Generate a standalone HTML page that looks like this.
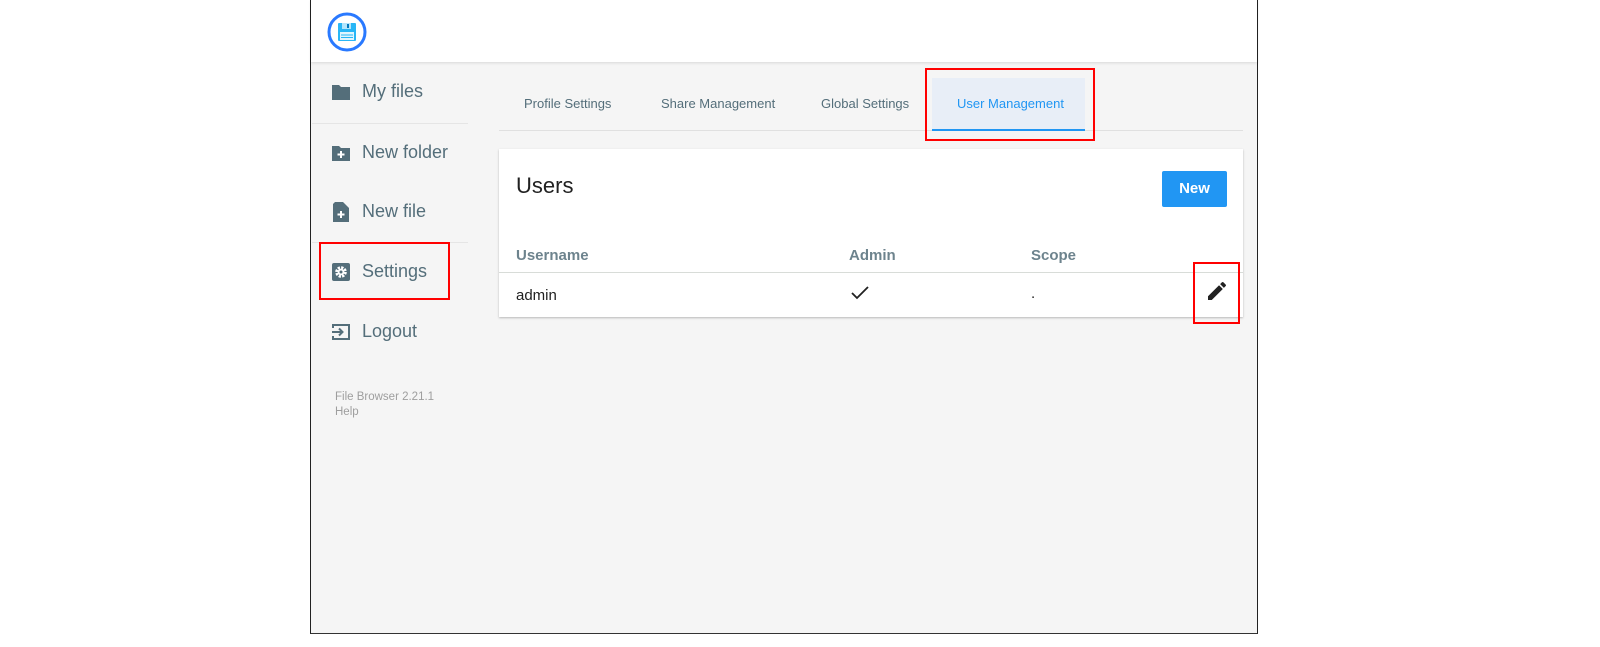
<!DOCTYPE html>
<html><head><style>
*{margin:0;padding:0;box-sizing:border-box}
body{width:1600px;height:647px;background:#fff;font-family:"Liberation Sans",sans-serif;position:relative;overflow:hidden}
.frame{position:absolute;left:310px;top:0;width:948px;height:634px;border-left:1px solid #222;border-right:1px solid #222;border-bottom:1px solid #333;background:#f5f5f5}
.hdr{position:absolute;left:0;top:0;right:0;height:62px;background:#fff;box-shadow:0 1px 3px rgba(0,0,0,.12)}
.a{position:absolute}
.nav{position:absolute;left:51px;font-size:18px;color:#546e7a}
.ico{position:absolute;left:20px}
.div{position:absolute;left:1px;width:156px;height:1px;background:#e5e5e5}
.red{position:absolute;border:2px solid #f00}
.tab{position:absolute;top:96px;font-size:13px;color:#546e7a}
.th{position:absolute;top:247px;font-size:15px;color:#546e7a;font-weight:bold;opacity:.85}
</style></head><body>
<div class="frame">
<div class="hdr">
<svg class="a" style="left:16px;top:12px" width="40" height="40" viewBox="0 0 40 40"><circle cx="20" cy="20" r="18" fill="#fff" stroke="#2979ff" stroke-width="3"/><rect x="11" y="11" width="18" height="18" rx="1" fill="#29b6f6"/><rect x="15" y="11" width="9" height="6" fill="#b3e5fc"/><rect x="20" y="12" width="2" height="4" fill="#0277bd"/><rect x="13" y="20" width="14" height="8" fill="#e1f5fe"/><line x1="14" y1="23" x2="26" y2="23" stroke="#29b6f6"/><line x1="14" y1="25.5" x2="26" y2="25.5" stroke="#29b6f6"/></svg>
</div>
<svg class="ico" style="top:83px" width="20" height="18" viewBox="0 0 20 18"><path d="M1 2h7l2 2h9v13H1z" fill="#546e7a"/></svg>
<div class="nav" style="top:81px">My files</div>
<div class="div" style="top:123px"></div>
<svg class="ico" style="top:144px" width="20" height="18" viewBox="0 0 20 18"><path d="M1 2h7l2 2h9v13H1z" fill="#546e7a"/><path d="M10 7v7M6.5 10.5h7" stroke="#fff" stroke-width="2"/></svg>
<div class="nav" style="top:142px">New folder</div>
<svg class="ico" style="top:202px;left:22px" width="16" height="20" viewBox="0 0 16 20"><path d="M2 0h8l6 6v14H0V2z" fill="#546e7a"/><path d="M8 9v7M4.5 12.5h7" stroke="#fff" stroke-width="2"/></svg>
<div class="nav" style="top:201px">New file</div>
<div class="div" style="top:242px"></div>
<svg class="ico" style="top:263px;left:21px" width="18" height="18" viewBox="0 0 18 18"><rect width="18" height="18" rx="2" fill="#546e7a"/><circle cx="9" cy="9" r="4.2" fill="none" stroke="#fff" stroke-width="3.2" stroke-dasharray="2.2 1.1"/><circle cx="9" cy="9" r="3.3" fill="#fff"/><circle cx="9" cy="9" r="1.5" fill="#546e7a"/></svg>
<div class="nav" style="top:261px">Settings</div>
<svg class="ico" style="top:323px;left:21px" width="18" height="18" viewBox="0 0 18 18"><path d="M1 5V2h16v14H1v-3" fill="none" stroke="#546e7a" stroke-width="2"/><path d="M0 9h10M7 5.5 10.5 9 7 12.5" fill="none" stroke="#546e7a" stroke-width="2"/></svg>
<div class="nav" style="top:321px">Logout</div>
<div class="a" style="left:24px;top:390px;font-size:11.5px;color:#9e9e9e;line-height:15px">File Browser 2.21.1<br>Help</div>
<div class="red" style="left:8px;top:242px;width:131px;height:58px"></div>

<div class="a" style="left:188px;top:130px;width:744px;height:1px;background:#e0e0e0"></div>
<div class="a" style="left:621px;top:78px;width:153px;height:53px;background:#e8eef7;border-bottom:2px solid #2196f3"></div>
<div class="tab" style="left:213px">Profile Settings</div>
<div class="tab" style="left:350px">Share Management</div>
<div class="tab" style="left:510px">Global Settings</div>
<div class="tab" style="left:646px;color:#2196f3">User Management</div>
<div class="red" style="left:614px;top:68px;width:170px;height:73px"></div>

<div class="a" style="left:188px;top:149px;width:744px;height:168px;background:#fff;box-shadow:0 1px 2px rgba(0,0,0,.25)">
<div class="a" style="left:17px;top:24px;font-size:22px;color:#212121">Users</div>
<div class="a" style="left:663px;top:22px;width:65px;height:36px;background:#2196f3;border-radius:2px;color:#fff;font-size:15px;font-weight:bold;text-align:center;line-height:36px">New</div>
<div class="th" style="left:17px;top:98px">Username</div>
<div class="th" style="left:350px;top:98px">Admin</div>
<div class="th" style="left:532px;top:98px">Scope</div>
<div class="a" style="left:0;top:123px;width:744px;height:1px;background:#d8dcd8"></div>
<div class="a" style="left:17px;top:138px;font-size:15px;color:#212121">admin</div>
<svg class="a" style="left:352px;top:137px" width="18" height="14" viewBox="0 0 18 14"><path d="M1 7l5 5L17 1" fill="none" stroke="#212121" stroke-width="1.8"/></svg>
<div class="a" style="left:532px;top:136px;font-size:15px;color:#212121">.</div>
<svg class="a" style="left:706px;top:130px" width="24" height="24" viewBox="0 0 24 24"><path d="M3 17.25V21h3.75L17.81 9.94l-3.75-3.75L3 17.25zM20.71 7.04a1 1 0 0 0 0-1.41l-2.34-2.34a1 1 0 0 0-1.41 0l-1.83 1.83 3.75 3.75 1.83-1.83z" fill="#212121"/></svg>
</div>
<div class="red" style="left:882px;top:262px;width:47px;height:62px"></div>
</div>
</body></html>
